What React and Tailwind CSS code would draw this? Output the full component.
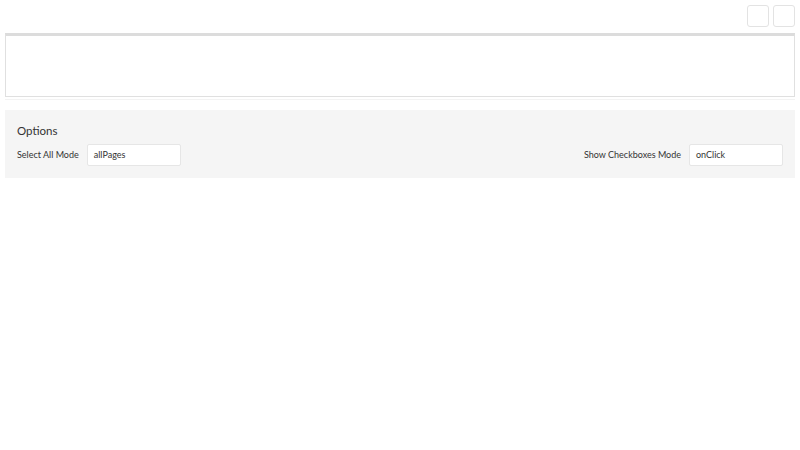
export default function App() {
  return (
    <div className="w-[800px] h-[450px] bg-white text-[#333] overflow-hidden" style={{ fontFamily: 'Lato, "Open Sans", sans-serif' }}>
      <div className="px-[5px]">
        <div className="h-[33px] flex items-start justify-end gap-[4px] pt-[5px]">
          <button className="w-[22px] h-[22px] border border-[#e3e3e3] rounded-[3px] bg-white"></button>
          <button className="w-[22px] h-[22px] border border-[#e3e3e3] rounded-[3px] bg-white"></button>
        </div>
        <div className="h-[64px] border border-[#e0e0e0] border-t-[3px] border-t-[#dcdcdc] bg-white"></div>
        <div className="h-[3px] border-b border-[#f3f3f3]"></div>
      </div>
      <div className="mx-[5px] mt-[10px] bg-[#f5f5f5] px-[12px] pt-[12px] pb-[12px]">
        <div className="text-[11.5px] leading-[17px] text-[#333]">Options</div>
        <div className="flex items-center justify-between mt-[5px]">
          <div className="flex items-center gap-[8px]">
            <span className="text-[9px] text-[#333]">Select All Mode</span>
            <div className="w-[94px] h-[22px] bg-white border border-[#e6e6e6] rounded-[2px] flex items-center px-[6px] text-[9px]">allPages</div>
          </div>
          <div className="flex items-center gap-[8px]">
            <span className="text-[9px] text-[#333]">Show Checkboxes Mode</span>
            <div className="w-[94px] h-[22px] bg-white border border-[#e6e6e6] rounded-[2px] flex items-center px-[6px] text-[9px]">onClick</div>
          </div>
        </div>
      </div>
    </div>
  );
}
